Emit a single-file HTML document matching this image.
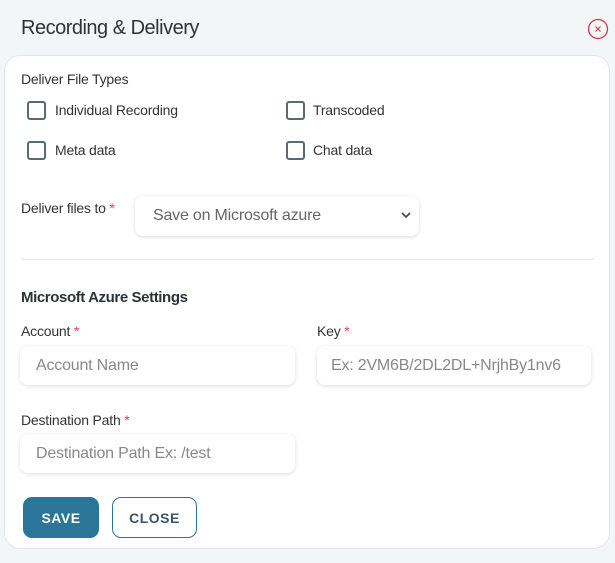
<!DOCTYPE html>
<html><head><style>
*{box-sizing:border-box;margin:0;padding:0}
body{width:615px;height:563px;background:#f3f6f7;font-family:"Liberation Sans",sans-serif;color:#333;position:relative;overflow:hidden}
.a{position:absolute;white-space:nowrap}
.card{position:absolute;left:4px;top:55px;width:606px;height:494px;background:#fff;border:1px solid #e3e6e8;border-radius:16px}
.cb{position:absolute;width:19px;height:19px;border:2px solid #566b78;border-radius:3px}
.lbl{font-size:14px;color:#333;letter-spacing:-0.2px}
.req{color:#e0474c}
.inp{position:absolute;background:#fff;border-radius:8px;box-shadow:0 1px 4px rgba(0,0,0,.14);font-size:16px;color:#888;padding-left:16px;display:flex;align-items:center;overflow:hidden;white-space:nowrap;letter-spacing:-0.2px}
</style></head><body>
<div class="a" style="left:21px;top:17px;font-size:20px;color:#2e3338;letter-spacing:-0.5px">Recording &amp; Delivery</div>
<svg class="a" style="left:587px;top:18px" width="22" height="22" viewBox="0 0 22 22"><circle cx="11" cy="11" r="9.5" fill="none" stroke="#d9363e" stroke-width="1.3"/><path d="M8.5 8.5l5 5M13.5 8.5l-5 5" stroke="#d9363e" stroke-width="1.1"/></svg>
<div class="card"></div>
<div class="a lbl" style="left:21px;top:71px">Deliver File Types</div>
<div class="cb" style="left:27px;top:101px"></div><div class="a lbl" style="left:55px;top:102px">Individual Recording</div>
<div class="cb" style="left:286px;top:101px"></div><div class="a lbl" style="left:313px;top:102px">Transcoded</div>
<div class="cb" style="left:27px;top:141px"></div><div class="a lbl" style="left:55px;top:142px">Meta data</div>
<div class="cb" style="left:286px;top:141px"></div><div class="a lbl" style="left:313px;top:142px">Chat data</div>
<div class="a lbl" style="left:21px;top:200px">Deliver files to <span class="req">*</span></div>
<div class="inp" style="left:135px;top:196px;width:284px;height:40px;padding-left:18px;color:#666">Save on Microsoft azure
<svg style="position:absolute;right:8px;top:16px" width="10" height="7" viewBox="0 0 10 7"><path d="M1 1l4 4 4-4" fill="none" stroke="#444" stroke-width="1.6"/></svg></div>
<div class="a" style="left:21px;top:259px;width:573px;height:1px;background:#e6e8ea"></div>
<div class="a" style="left:21px;top:289px;font-size:15px;color:#2e3338;font-weight:bold;letter-spacing:-0.4px">Microsoft Azure Settings</div>
<div class="a lbl" style="left:21px;top:323px">Account <span class="req">*</span></div>
<div class="inp" style="left:20px;top:346px;width:275px;height:39px">Account Name</div>
<div class="a lbl" style="left:317px;top:323px">Key <span class="req">*</span></div>
<div class="inp" style="left:317px;top:346px;width:274px;height:39px;padding-left:14px">Ex: 2VM6B/2DL2DL+NrjhBy1nv6</div>
<div class="a lbl" style="left:21px;top:412px">Destination Path <span class="req">*</span></div>
<div class="inp" style="left:20px;top:434px;width:275px;height:39px">Destination Path Ex: /test</div>
<div class="a" style="left:23px;top:497px;width:76px;height:41px;background:#2b7599;border-radius:9px;color:#fff;font-weight:bold;font-size:14px;display:flex;align-items:center;justify-content:center;letter-spacing:0.5px">SAVE</div>
<div class="a" style="left:112px;top:497px;width:85px;height:41px;border:1px solid #2b7599;border-radius:9px;color:#3a5566;font-weight:bold;font-size:14px;display:flex;align-items:center;justify-content:center;letter-spacing:0.5px">CLOSE</div>
</body></html>
